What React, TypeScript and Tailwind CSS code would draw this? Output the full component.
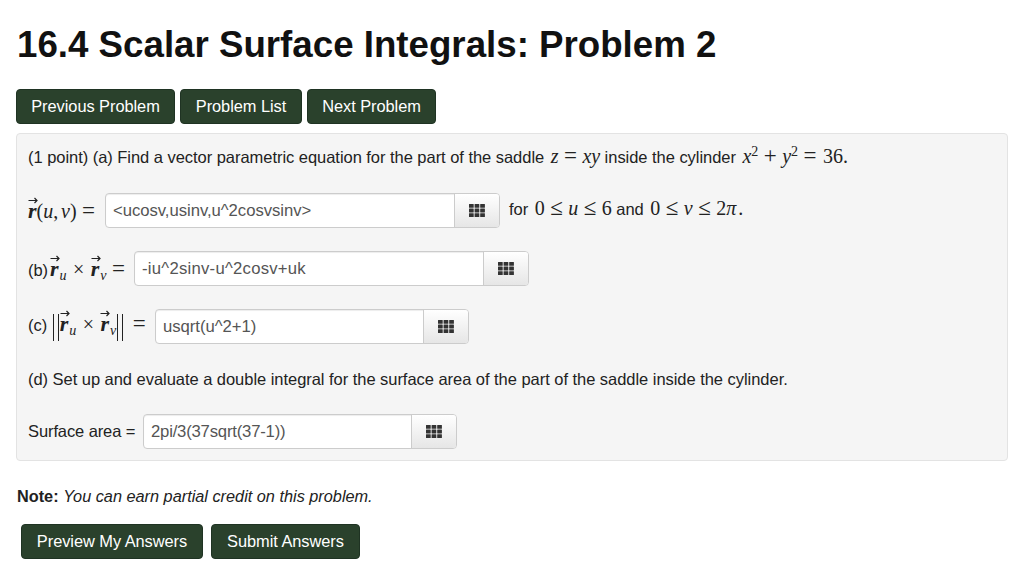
import type { ReactNode } from 'react'

const BUTTON =
  'h-[35px] rounded-[4px] border border-[#1f3323] bg-[#2a412c] text-[16.4px] tracking-[-0.05px] text-white flex items-center justify-center'

function DarkButton({ width, children }: { width: string; children: ReactNode }) {
  return <div className={`${BUTTON} ${width}`}>{children}</div>
}

function GridIcon() {
  const cells = []
  for (let row = 0; row < 3; row++) {
    for (let col = 0; col < 3; col++) {
      cells.push(<rect key={`${row}-${col}`} x={col * 5.6} y={row * 4.6} width="4.7" height="3.8" rx="0.3" />)
    }
  }
  return (
    <svg width="16" height="13" viewBox="0 0 16 13" fill="#333333">
      {cells}
    </svg>
  )
}

function AnswerInput({ value, width, spacing = '' }: { value: string; width: string; spacing?: string }) {
  return (
    <div className={`flex h-[35px] rounded-[4px] border border-[#cccccc] bg-white shadow-[inset_0_1px_1px_rgba(0,0,0,0.075)] ${width}`}>
      <div className={`flex-1 flex items-center pl-[7px] text-[16.7px] text-[#555555] whitespace-nowrap overflow-hidden ${spacing}`}>
        {value}
      </div>
      <div className="w-[45px] flex items-center justify-center border-l border-[#cccccc] rounded-r-[3px] bg-gradient-to-b from-white to-[#e6e6e6]">
        <GridIcon />
      </div>
    </div>
  )
}

function M({ children }: { children: ReactNode }) {
  return <span className="ml-[2px] font-['Liberation_Serif',serif] text-[20px] leading-none">{children}</span>
}

function I({ children }: { children: ReactNode }) {
  return <i className="font-['Liberation_Serif',serif]">{children}</i>
}

// relation or operator, spaced the way MathJax does it
function Op({ children }: { children: ReactNode }) {
  return <span className="mx-[5.5px] font-['Liberation_Serif',serif] text-[23px] leading-none">{children}</span>
}

function Cross() {
  return <span className="mx-[6.5px] font-['Liberation_Serif',serif] text-[20px] leading-none">×</span>
}

function Sup({ children }: { children: ReactNode }) {
  return <sup className="text-[14px] not-italic">{children}</sup>
}

function VecR() {
  return (
    <span className="relative inline-block font-['Liberation_Serif',serif] text-[22px] leading-none font-bold italic">
      r
      <svg className="absolute left-[0px] top-[-3px]" width="10" height="7" viewBox="0 0 10 7" fill="none" stroke="#222222" strokeWidth="1.2">
        <path d="M0.5 3.5H9M6.5 1L9 3.5L6.5 6" />
      </svg>
    </span>
  )
}

function Sub({ children }: { children: ReactNode }) {
  return <i className="font-['Liberation_Serif',serif] text-[14px] leading-none relative top-[4px] ml-[1px]">{children}</i>
}

function Bars() {
  return <span className="inline-block align-middle w-[6px] h-[27px] border-x border-[#222222] mx-[1px]" />
}

export default function App() {
  return (
    <div className="w-[1024px] h-[573px] overflow-hidden bg-white font-['Liberation_Sans',Arial,sans-serif] text-[#222222] pl-4 pr-4 pt-[23px]">
      <h1 className="text-[36.7px] leading-[44px] font-bold text-[#111111] pl-[1px]">
        16.4 Scalar Surface Integrals: Problem 2
      </h1>

      <div className="flex gap-[5px] mt-[22px]">
        <DarkButton width="w-[159px]">Previous Problem</DarkButton>
        <DarkButton width="w-[122px]">Problem List</DarkButton>
        <DarkButton width="w-[129px]">Next Problem</DarkButton>
      </div>

      <div className="mt-[9px] w-[992px] h-[328px] rounded-[4px] border border-[#e3e3e3] bg-[#f5f5f5] pl-[11px] pt-[10px] text-[16.5px] tracking-[-0.04px]">
        <div className="h-[22px] leading-[22px] whitespace-pre">
          {'(1 point) (a) Find a vector parametric equation for the part of the saddle '}
          <M>
            <I>z</I>
            <Op>=</Op>
            <I>xy</I>
          </M>
          {' inside the cylinder '}
          <M>
            <I>x</I>
            <Sup>2</Sup>
            <Op>+</Op>
            <I>y</I>
            <Sup>2</Sup>
            <Op>=</Op>
            <span className="ml-[1px]">36.</span>
          </M>
        </div>

        <div className="flex items-center mt-[27px] h-[35px]">
          <span className="w-[77px] whitespace-pre leading-[22px]">
            <VecR />
            <span className="font-['Liberation_Serif',serif] text-[20px] leading-none">
              (<I>u</I>,<span className="ml-[3px]"><I>v</I></span>)
            </span>
            <Op>=</Op>
          </span>
          <AnswerInput value="<ucosv,usinv,u^2cosvsinv>" width="w-[395px]" />
          <span className="ml-[9px] whitespace-pre leading-[22px] relative top-[-3px]">
            {'for '}
            <M>
              0<Op>≤</Op>
              <I>u</I>
              <Op>≤</Op>6
            </M>
            {' and '}
            <M>
              0<Op>≤</Op>
              <I>v</I>
              <Op>≤</Op>2<span className="mr-[2px]"><I>π</I></span>.
            </M>
          </span>
        </div>

        <div className="flex items-center mt-[23px] h-[35px]">
          <span className="w-[106px] whitespace-pre leading-[22px]">
            <span className="mr-[2px]">(b)</span>
            <VecR />
            <Sub>u</Sub>
            <Cross />
            <VecR />
            <Sub>v</Sub>
            <Op>=</Op>
          </span>
          <AnswerInput value="-iu^2sinv-u^2cosv+uk" width="w-[395px]" spacing="tracking-[0.25px]" />
        </div>

        <div className="flex items-center mt-[23px] h-[35px]">
          <span className="w-[127px] whitespace-pre leading-[22px]">
            {'(c) '}
            <Bars />
            <VecR />
            <Sub>u</Sub>
            <Cross />
            <VecR />
            <Sub>v</Sub>
            <Bars />
            <span className="ml-[3px]">
              <Op>=</Op>
            </span>
          </span>
          <AnswerInput value="usqrt(u^2+1)" width="w-[314px]" />
        </div>

        <div className="mt-[24px] h-[22px] leading-[22px]">
          (d) Set up and evaluate a double integral for the surface area of the part of the saddle inside the cylinder.
        </div>

        <div className="flex items-center mt-[24px] h-[35px]">
          <span className="w-[115px] whitespace-pre tracking-[-0.1px]">Surface area = </span>
          <AnswerInput value="2pi/3(37sqrt(37-1))" width="w-[314px]" spacing="tracking-[-0.2px]" />
        </div>
      </div>

      <div className="mt-[24px] pl-[1px] h-[21px] leading-[22px] text-[16.3px] whitespace-pre">
        <b>Note: </b>
        <i>You can earn partial credit on this problem.</i>
      </div>

      <div className="flex gap-[8px] mt-[18px] ml-[5px]">
        <DarkButton width="w-[182px]">Preview My Answers</DarkButton>
        <DarkButton width="w-[149px]">Submit Answers</DarkButton>
      </div>
    </div>
  )
}
